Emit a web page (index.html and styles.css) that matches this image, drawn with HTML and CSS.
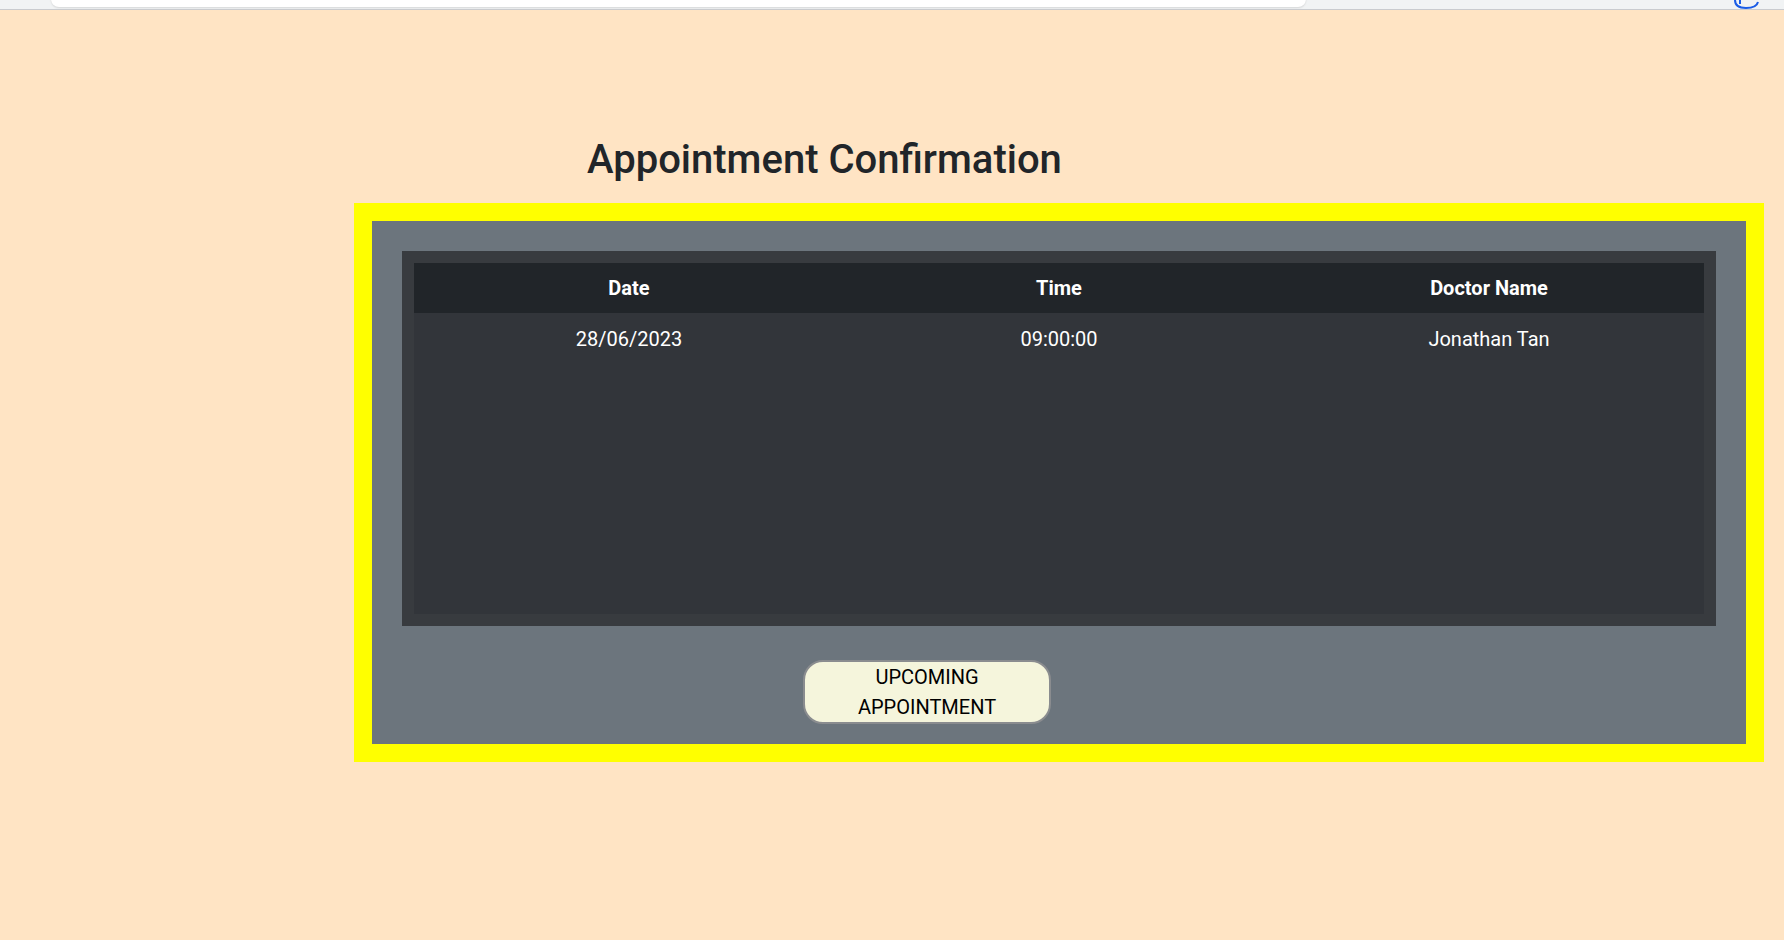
FILE: index.html
```html
<!DOCTYPE html>
<html lang="en">
<head>
<meta charset="utf-8">
<title>Appointment Confirmation</title>
<link rel="stylesheet" href="styles.css">
</head>
<body>
<div class="chrome">
  <div class="chrome-box"></div>
  <svg class="chrome-icon" width="30" height="9" viewBox="0 0 30 9"><path d="M3 0 C3 6 8 8 14 8 C20 8 25 6 26 2" fill="none" stroke="#1a5ce6" stroke-width="2"/><path d="M8 0 L8 4" stroke="#1a5ce6" stroke-width="2"/></svg>
</div>
<main class="page">
  <h1 class="title">Appointment Confirmation</h1>
  <section class="frame">
    <div class="table-wrap">
      <div class="table-area">
        <table class="appt-table">
          <thead>
            <tr><th>Date</th><th>Time</th><th>Doctor Name</th></tr>
          </thead>
          <tbody>
            <tr><td>28/06/2023</td><td>09:00:00</td><td>Jonathan Tan</td></tr>
          </tbody>
        </table>
      </div>
    </div>
    <button class="upcoming-btn" type="button">UPCOMING APPOINTMENT</button>
  </section>
</main>
</body>
</html>
```
FILE: styles.css
```css
html, body {
  margin: 0;
  padding: 0;
}
body {
  background: #ffe4c4;
  font-family: Roboto, "Liberation Sans", Arial, sans-serif;
  color: #212529;
  min-height: 940px;
}
.chrome {
  position: relative;
  height: 9px;
  background: #f1f3f4;
  border-bottom: 1px solid #c9cbcf;
  overflow: hidden;
}
.chrome-box {
  position: absolute;
  left: 51px;
  top: -10px;
  width: 1255px;
  height: 17px;
  background: #ffffff;
  border-radius: 8px;
  box-shadow: 0 1px 2px rgba(0,0,0,0.12);
}
.chrome-icon {
  position: absolute;
  right: 22px;
  top: 0;
}
.page {
  padding-top: 126px;
}
.title {
  margin: 0 0 19px 587px;
  font-size: 40px;
  font-weight: 500;
  line-height: 48px;
  color: #212529;
}
.frame {
  margin-left: 354px;
  width: 1410px;
  box-sizing: border-box;
  border: 18px solid #ffff00;
  background: #6c757d;
  padding: 30px 30px 20px 30px;
}
.table-wrap {
  background: #383b3f;
  padding: 12px;
}
.table-area {
  height: 351px;
  background: #32353a;
}
.appt-table {
  width: 100%;
  border-collapse: collapse;
  table-layout: fixed;
  color: #ffffff;
  font-size: 20px;
  line-height: 30px;
}
.appt-table th {
  background: #212529;
  font-weight: 700;
  padding: 10px 8px;
  text-align: center;
}
.appt-table td {
  padding: 11px 8px 9px;
  text-align: center;
  font-weight: 400;
}
.upcoming-btn {
  display: block;
  margin: 34px 0 0 401px;
  width: 248px;
  height: 64px;
  box-sizing: border-box;
  padding: 0 20px;
  border: 2px solid #8a8c8f;
  border-radius: 20px;
  background: #f5f5dc;
  color: #000000;
  font-family: Roboto, "Liberation Sans", Arial, sans-serif;
  font-size: 20px;
  line-height: 30px;
  text-align: center;
}
```
